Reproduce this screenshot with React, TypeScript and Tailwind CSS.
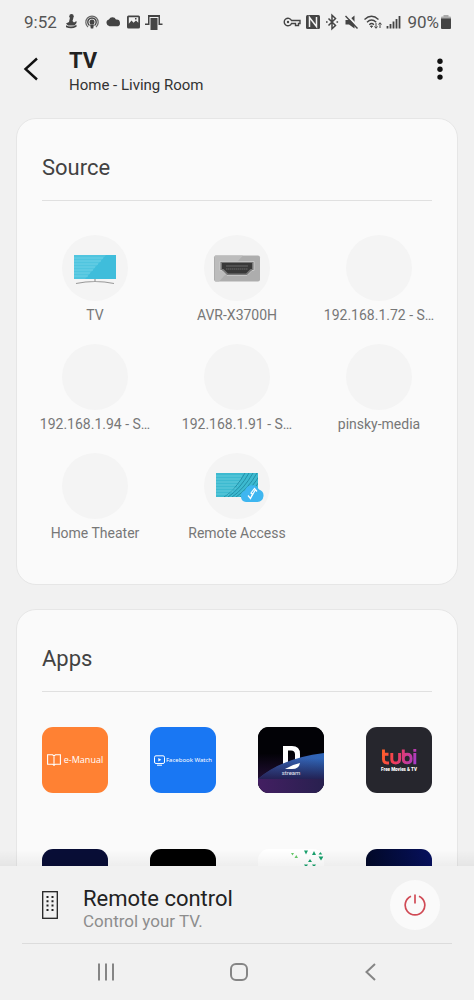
import React from "react";

const sans = "font-['Roboto','Liberation_Sans',sans-serif]";

function NotificationIcons() {
  return (
    <svg width="98" height="18" viewBox="0 0 98 18" className="ml-2 shrink-0" fill="#444" aria-hidden="true">
      <circle cx="6.500" cy="3.200" r="2.200" />
      <path d="M5 4.500h3.500l-1 3.500 1.500 1.500 2.500-1.500v2l-2 2.500H3L1 10.500l3-1.500z" />
      <path d="M1 12.200q5 3 10.500-.5v2q-5 3-10.500.5z" />
      <path d="M23 14a6.200 6.200 0 1 1 8 0" fill="none" stroke="#666" strokeWidth="1.200" />
      <path d="M24.500 12.500a4.200 4.200 0 1 1 5 0" fill="none" stroke="#444" strokeWidth="1.400" />
      <circle cx="27" cy="9" r="2.500" />
      <path d="M25 11.500h4l-.8 4h-2.400z" />
      <path d="M44.500 13.200a3.500 3.500 0 0 1-.6-6.800A4 4 0 0 1 51 6.600a3.600 3.600 0 0 1 4 3.300 3 3 0 0 1-1.800 3.300z" />
      <path fillRule="evenodd" d="M63.500 2.500h10a1.500 1.500 0 0 1 1.500 1.500v10a1.500 1.500 0 0 1-1.500 1.500h-10A1.500 1.500 0 0 1 62 14V4a1.500 1.500 0 0 1 1.500-1.500zM63.800 4.300v6.500l2.700-3.300 2 2.300 2.500-2.300 2.300 2.300v-5.500zM70 5h1.500v1.500H70z" />
      <path d="M83 2h12v8.500h2.500V12h-4V4h-9v8H80v-1.500h3z" />
      <path d="M85.500 5h7v12h-7z" />
    </svg>
  );
}

function SystemIcons() {
  return (
    <svg width="118" height="18" viewBox="0 0 118 18" className="shrink-0" fill="none" stroke="#444" aria-hidden="true">
      <path d="M8.500 7.500H17v3h-1.500v2h-3v-2h-4a3.800 3.800 0 1 1 0-3z" strokeWidth="1.400" />
      <circle cx="5" cy="9" r="1.200" fill="#444" stroke="none" />
      <rect x="23" y="2" width="14" height="14" rx="1.500" fill="#444" stroke="none" />
      <path d="M26.500 14V4.500l7 9V4" stroke="#f1f1f1" strokeWidth="1.500" />
      <path d="M45.500 5.500l7 7-3.500 3.200V2.300l3.500 3.200-7 7" strokeWidth="1.500" />
      <path d="M43 9h1.600M53.500 9h1.600" strokeWidth="1.700" />
      <path d="M62.500 7h3.500l5.500-4.500v13L66 11.500h-3.500z" fill="#444" stroke="none" />
      <path d="M63.500 1.500l12 13" stroke="#f1f1f1" strokeWidth="2" />
      <path d="M62.500 3l12 12.500" strokeWidth="1.400" />
      <path d="M81.500 6.500q7-6.500 14 0M84 9.200q4.600-4.400 9.200 0M86.300 11.700q2.300-2.300 4.600 0" strokeWidth="1.400" />
      <path d="M87.500 13h2l-1 1.500z" fill="#444" />
      <path d="M93 10v5M91.500 13.500l1.500 1.800 1.500-1.800M97 15v-5M95.500 11.500l1.500-1.800 1.500 1.800" strokeWidth="1" />
      <path d="M104.500 13v2.500M107.500 11v4.500M110.500 8.500v7M113.500 6v9.500M116.500 3v12.500" strokeWidth="1.800" />
    </svg>
  );
}

function TvIcon() {
  return (
    <svg width="66" height="66" viewBox="0 0 66 66" aria-hidden="true">
      <rect x="12" y="20" width="42" height="24" fill="#3fbddb" />
      <path d="M12 20h32L23 44H12z" fill="#50c5df" />
      <path d="M12 23h29M12 26h27M12 29h24M12 32h21M12 35h19M12 38h16M12 41h14" stroke="#79d5e9" strokeWidth=".7" />
      <path d="M33 44v2.500M14 48.500q19-4 38 0" fill="none" stroke="#999" strokeWidth="1.200" />
    </svg>
  );
}

function HdmiIcon() {
  return (
    <svg width="66" height="66" viewBox="0 0 66 66" aria-hidden="true">
      <rect x="10" y="20.500" width="46" height="26" rx="2" fill="#adadad" />
      <path d="M11 20.500h28l-24 26h-4z" fill="#bcbcbc" />
      <path d="M16 26.500h34v9h-2l-5 5H23l-5-5h-2z" fill="#777" stroke="#d0d0d0" strokeWidth=".8" />
      <path d="M18 28h30v6h-1.500l-4.500 4.500H24L19.500 34H18z" fill="#383838" />
      <path d="M22 31h22" stroke="#777" strokeWidth=".8" />
      <path d="M22 34h22" stroke="#777" strokeWidth=".8" strokeDasharray="1.500 .5" />
    </svg>
  );
}

function RemoteAccessIcon() {
  return (
    <svg width="66" height="66" viewBox="0 0 66 66" aria-hidden="true">
      <defs>
        <clipPath id="remote-screen"><path d="M54 20v24H18Q31 39 38 20z" /></clipPath>
      </defs>
      <rect x="12" y="20" width="42" height="24" fill="#3dbad0" />
      <path d="M12 23h26M12 26h25M12 29h24M12 32h22M12 35h20M12 38h17M12 41h13" stroke="#70d0df" strokeWidth=".8" />
      <g clipPath="url(#remote-screen)" fill="none" stroke="#238fa7" strokeWidth="1">
        <path d="M20 44q12-8 21-24M24 44q12-8 21-24M28 44q12-8 21-24M32 44q12-8 21-24M36 44q12-8 21-24M40 44q12-8 21-24" />
      </g>
      <path d="M42 49a5.800 5.800 0 0 1-1-11.300 7.500 7.500 0 0 1 14-1.200A6.400 6.400 0 0 1 53.500 49z" fill="#3eb6f0" />
      <path d="M44 42.500l2.500 3 2-4.500-1.500-1 3.500-4.500 2.500 3M46.500 45.500l5-9" fill="none" stroke="#fff" strokeWidth="1.200" />
    </svg>
  );
}

const sources = [
  { name: "TV", icon: <TvIcon /> },
  { name: "AVR-X3700H", icon: <HdmiIcon /> },
  { name: "192.168.1.72 - S…", icon: null },
  { name: "192.168.1.94 - S…", icon: null },
  { name: "192.168.1.91 - S…", icon: null },
  { name: "pinsky-media", icon: null },
  { name: "Home Theater", icon: null },
  { name: "Remote Access", icon: <RemoteAccessIcon /> },
];

const tile = "flex size-[66px] items-center justify-center overflow-hidden rounded-[11px]";

function Section({ title, children }: { title: string; children: React.ReactNode }) {
  return (
    <section className="shrink-0 rounded-[20px] border border-[#e6e6e6] bg-[#fafafa]">
      <h2 className="mx-[25px] border-b border-[#e0e0e0] pt-[34px] pb-[17px] text-[22px] leading-[30px] text-[#424242]">
        {title}
      </h2>
      {children}
    </section>
  );
}

function DstreamLogo() {
  return (
    <svg width="66" height="66" viewBox="0 0 66 66" aria-hidden="true">
      <defs>
        <linearGradient id="ds-planet" x1="0" y1="0" x2="1" y2="0">
          <stop offset="0" stopColor="#3d58a6" />
          <stop offset="1" stopColor="#2f66b8" />
        </linearGradient>
        <linearGradient id="ds-shade" x1="0" y1="0" x2="0" y2="1">
          <stop offset=".2" stopColor="#19163f" stopOpacity="0" />
          <stop offset="1" stopColor="#221b4b" stopOpacity=".9" />
        </linearGradient>
        <linearGradient id="ds-floor" x1="0" y1="0" x2="1" y2="0">
          <stop offset="0" stopColor="#431f62" />
          <stop offset="1" stopColor="#28204f" />
        </linearGradient>
        <linearGradient id="ds-sky" x1="0" y1="0" x2="0" y2="1">
          <stop offset=".4" stopColor="#020206" />
          <stop offset="1" stopColor="#32164e" />
        </linearGradient>
      </defs>
      <path d="M0 0h66v66H0z" fill="url(#ds-sky)" />
      <path fillRule="evenodd" d="M25 19h9q8 0 8 8v7q0 8-8 8h-9zM30 23.500V38h3q4 0 4-4v-6.500q0-4-4-4z" fill="#fff" />
      <path d="M0 52Q24 31 66 26v26z" fill="url(#ds-planet)" />
      <path d="M0 52Q24 31 66 26v26z" fill="url(#ds-shade)" />
      <path d="M0 52h66v14H0z" fill="url(#ds-floor)" />
      <path d="M27 42q7-4.500 15-6-1 6-8 6z" fill="#fff" />
      <text x="33" y="48" textAnchor="middle" fontFamily="Roboto" fontSize="6" fill="#e8e8f2">stream</text>
    </svg>
  );
}

function TriangleLogo() {
  return (
    <svg width="66" height="66" viewBox="0 0 66 66" aria-hidden="true">
      <path d="M46 1.500h4l-2 4zM54 6l2-4 2 4zM60.500 5.500h4l-2-2.500zM60.500 7.500h5l-2.500 4zM50 13l2-3 2 3zM46 15.500h4l-2 3zM54 15.500h4l-2 3z" fill="#18a06c" />
      <path d="M33 4h3l-1.500 2.500zM36.500 9l1.800-3L40 9z" fill="#66c969" />
    </svg>
  );
}

const apps = [
  {
    name: "e-Manual",
    color: "bg-[#ff8133]",
    content: (
      <>
        <svg width="14" height="12" viewBox="0 0 14 12" fill="none" stroke="#fff" strokeWidth="1.100" aria-hidden="true">
          <path d="M.6.800h5L7 2l1.400-1.200h5v9.400h-5L7 11.400l-1.400-1.200h-5zM7 2v9" />
        </svg>
        <span className="ml-[3px] font-['Open_Sans',sans-serif] text-[9px] font-medium text-white">e-Manual</span>
      </>
    ),
  },
  {
    name: "Facebook Watch",
    color: "bg-[#1977f3]",
    content: (
      <>
        <svg width="11" height="11" viewBox="0 0 11 11" fill="none" stroke="#fff" aria-hidden="true">
          <rect x=".5" y=".8" width="10" height="7.700" rx="1.500" />
          <path d="M3 10.200h5" />
          <path d="M4.300 3v3.500l3-1.700z" fill="#fff" stroke="none" />
        </svg>
        <span className="ml-px font-['Noto_Sans',sans-serif] text-[6px] whitespace-nowrap text-white">Facebook Watch</span>
      </>
    ),
  },
  { name: "Dstream", color: "bg-black", content: <DstreamLogo /> },
  {
    name: "tubi",
    color: "bg-[#26262d]",
    content: (
      <svg width="66" height="66" viewBox="0 0 66 66" aria-hidden="true">
        <defs>
          <linearGradient id="tubi-ink" gradientUnits="userSpaceOnUse" x1="16" y1="24" x2="50" y2="36">
            <stop offset="0" stopColor="#ff6227" />
            <stop offset=".4" stopColor="#f43c56" />
            <stop offset="1" stopColor="#a43acb" />
          </linearGradient>
        </defs>
        <g fill="none" stroke="url(#tubi-ink)" strokeWidth="2.900">
          <path d="M17.500 22.500v10q0 3.500 3.500 3.500h2M16 27.300h6.500M25.800 26v6q0 4 3.900 4t3.900-4v-6M37.300 22.500v9q0 4.300 3.900 4.300t3.900-4.300-3.900-4.300-3.900 4.300" />
          <path d="M48.800 26v11.300M48.800 22v2.700" />
        </g>
        <text x="33" y="43.500" textAnchor="middle" fontFamily="Roboto" fontWeight="900" fontSize="4.500" fill="#fff">Free Movies &amp; TV</text>
      </svg>
    ),
  },
  { name: "Streaming app", color: "bg-[#080d36]", content: null },
  { name: "Video app", color: "bg-black", content: null },
  { name: "Play app", color: "bg-white", content: <TriangleLogo /> },
  { name: "Movies app", color: "bg-linear-to-r from-[#020828] to-[#07105e]", content: null },
];

export default function App() {
  return (
    <div className={`flex h-screen flex-col overflow-hidden bg-[#f1f1f1] ${sans}`}>
      <div className="flex h-11 shrink-0 items-center justify-between pr-[23px] pl-6 text-[17px] leading-5 text-[#555]">
        <div className="flex items-center">
          <span>9:52</span>
          <NotificationIcons />
        </div>
        <div className="flex items-center">
          <SystemIcons />
          <span className="ml-1.5">90%</span>
          <svg width="10" height="14" viewBox="0 0 10 14" className="ml-0.5" aria-hidden="true">
            <path d="M2.500 0h5v1.500H9q1 0 1 1V4H0V2.500q0-1 1-1h1.500z" fill="#aaa" />
            <path d="M0 3.500h10V13q0 1-1 1H1q-1 0-1-1z" fill="#444" />
          </svg>
        </div>
      </div>

      <header className="flex h-[74px] shrink-0 items-start pr-[22px] pl-[23px]">
        <button type="button" aria-label="Back" className="mt-[13px]">
          <svg width="16" height="24" viewBox="0 0 16 24" fill="none" stroke="#111" strokeWidth="2.400" aria-hidden="true">
            <path d="M14 1.500L2.500 12 14 22.500" />
          </svg>
        </button>
        <div className="ml-[30px] flex-1 pt-1">
          <h1 className="text-[22px] leading-[26px] font-bold text-[#222]">TV</h1>
          <p className="text-[15px] leading-[22px] text-[#333]">Home - Living Room</p>
        </div>
        <button type="button" aria-label="More options" className="mt-[13px]">
          <svg width="24" height="24" viewBox="0 0 24 24" fill="#111" aria-hidden="true">
            <circle cx="12" cy="4.300" r="2.700" />
            <circle cx="12" cy="12.200" r="2.700" />
            <circle cx="12" cy="20.100" r="2.700" />
          </svg>
        </button>
      </header>

      <main className="relative flex min-h-0 flex-1 flex-col gap-6 overflow-hidden px-4">
        <Section title="Source">
          <ul className="grid grid-cols-3 px-[7px] pt-[34px] pb-[22px]">
            {sources.map((source) => (
              <li key={source.name} className="h-[109px]">
                <button type="button" className="flex w-full flex-col items-center">
                  <span className="size-[66px] rounded-full bg-[#f4f4f4]">{source.icon}</span>
                  <span className="mt-[3px] text-[14px] leading-[22px] whitespace-nowrap text-[#777]">{source.name}</span>
                </button>
              </li>
            ))}
          </ul>
        </Section>

        <Section title="Apps">
          <ul className="grid grid-cols-[repeat(4,66px)] justify-between gap-y-14 px-[25px] pt-[35px] pb-8">
            {apps.map((app) => (
              <li key={app.name}>
                <button type="button" aria-label={app.name} className={`${tile} ${app.color}`}>
                  {app.content}
                </button>
              </li>
            ))}
          </ul>
        </Section>
        <div className="pointer-events-none absolute inset-x-0 bottom-0 h-4 bg-linear-to-b from-transparent to-black/5" />
      </main>

      <footer className="shrink-0">
        <div className="mx-[22px] flex h-[78px] items-center border-b border-[#dcdcdc] pr-3 pl-5">
          <svg width="16" height="28" viewBox="0 0 16 28" aria-hidden="true">
            <rect x=".7" y=".7" width="14.600" height="26.600" fill="none" stroke="#222" strokeWidth="1.300" />
            <path d="M5.500 5v16M10.500 5v16" stroke="#222" strokeWidth="2" strokeDasharray="2 2.300" />
          </svg>
          <div className="ml-[25px] flex-1 pt-2">
            <p className="text-[22px] leading-[25px] text-[#222]">Remote control</p>
            <p className="text-[17px] leading-5 text-[#8d8d8d]">Control your TV.</p>
          </div>
          <button type="button" aria-label="Power" className="flex size-[50px] items-center justify-center rounded-full bg-[#fafafa]">
            <svg width="22" height="22" viewBox="0 0 22 22" fill="none" stroke="#d04a55" strokeWidth="1.700" aria-hidden="true">
              <path d="M7 2.200a9.800 9.800 0 1 0 8 0M11 .5V9.500" />
            </svg>
          </button>
        </div>
        <nav className="flex h-14 items-center justify-between pr-[94px] pl-[97px] text-[#858585]" aria-label="System">
          <button type="button" aria-label="Recent apps">
            <svg width="18" height="18" viewBox="0 0 18 18" stroke="currentColor" strokeWidth="2" aria-hidden="true">
              <path d="M2 .5v17M9 .5v17M16 .5v17" />
            </svg>
          </button>
          <button type="button" aria-label="Home">
            <svg width="18" height="18" viewBox="0 0 18 18" fill="none" stroke="currentColor" strokeWidth="2" aria-hidden="true">
              <rect x="1" y="1" width="16" height="16" rx="5" />
            </svg>
          </button>
          <button type="button" aria-label="Go back">
            <svg width="18" height="18" viewBox="0 0 18 18" fill="none" stroke="currentColor" strokeWidth="2" aria-hidden="true">
              <path d="M13 1L4.500 9l8.500 8" />
            </svg>
          </button>
        </nav>
      </footer>
    </div>
  );
}
